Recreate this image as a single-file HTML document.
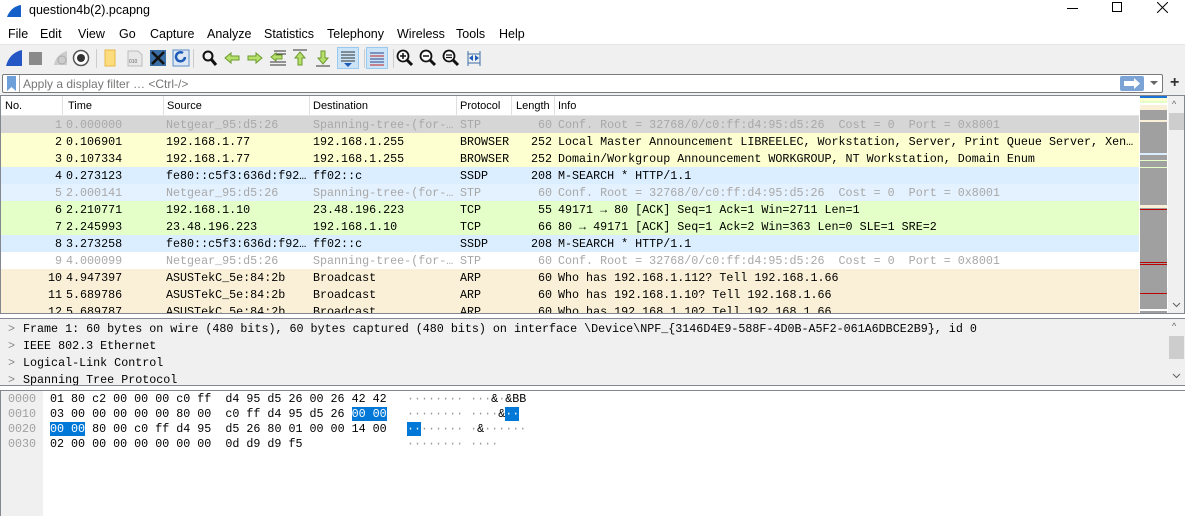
<!DOCTYPE html>
<html><head><meta charset="utf-8"><style>
*{margin:0;padding:0;box-sizing:border-box}
body{width:1185px;height:516px;overflow:hidden;background:#fff;font-family:"Liberation Sans",sans-serif;position:relative;font-size:12px;color:#000}
.a{position:absolute}
.menu span{position:absolute;top:27px;font-size:12.5px}
.mono{font-family:"Liberation Mono",monospace;font-size:11.7px;white-space:pre}
.row{position:absolute;left:1px;width:1138px;height:17px}
.row span{position:absolute;top:2px}
.r{text-align:right}
.hdr span{position:absolute;top:4px;font-size:11px}
.sep{position:absolute;top:0;width:1px;height:19px;background:#e0e0e0}
.ic{position:absolute;top:49px;width:18px;height:18px}
</style></head><body>
<!-- title -->
<svg class="a" style="left:6px;top:4px" width="16" height="14"><path d="M1 13 C3 7 8 2 15 1 L15 13 Z" fill="#1560c8"/></svg>
<div class="a" style="left:29px;top:3px;font-size:12.5px">question4b(2).pcapng</div>
<div class="a" style="left:1067px;top:8px;width:11px;height:1px;background:#000"></div>
<div class="a" style="left:1112px;top:2px;width:10px;height:10px;border:1px solid #000"></div>
<svg class="a" style="left:1157px;top:2px" width="11" height="11"><path d="M0 0L11 11M11 0L0 11" stroke="#000"/></svg>
<div class="menu">
<span style="left:8px">File</span><span style="left:40px">Edit</span><span style="left:78px">View</span><span style="left:119px">Go</span><span style="left:150px">Capture</span><span style="left:207px">Analyze</span><span style="left:264px">Statistics</span><span style="left:327px">Telephony</span><span style="left:397px">Wireless</span><span style="left:456px">Tools</span><span style="left:499px">Help</span>
</div>
<!-- toolbar -->
<div class="a" style="left:0;top:44px;width:1185px;height:27px;background:#f0f0f0;border-top:1px solid #e6e6e6"></div>
<svg class="ic" style="left:5px"><path d="M1 17 C3 9 8 3 17 1 L17 17Z" fill="#2457c5"/></svg>
<div class="ic" style="left:29px;top:52px;width:13px;height:13px;background:#8a8a8a"></div>
<svg class="ic" style="left:51px"><path d="M3 16 C4 9 9 4 16 2 L16 16Z" fill="#ccc"/><circle cx="11" cy="11" r="4" fill="none" stroke="#aaa"/></svg>
<svg class="ic" style="left:72px"><circle cx="9" cy="9" r="7.5" fill="#fff" stroke="#555" stroke-width="1.5"/><circle cx="9" cy="9" r="4" fill="#333"/></svg>
<div class="a" style="left:96px;top:49px;width:1px;height:19px;background:#ccc"></div>
<svg class="ic" style="left:103px"><path d="M2 1h10v16H2z" fill="#fddc7e" stroke="#e8b84a"/></svg>
<svg class="ic" style="left:126px"><path d="M2 2h10l4 4v11H2z" fill="#e8e8e8" stroke="#bbb"/><text x="3" y="14" font-size="5" fill="#666">010</text></svg>
<svg class="ic" style="left:149px"><rect x="1" y="1" width="16" height="16" fill="#3b6ea5"/><path d="M3 3L15 15M15 3L3 15" stroke="#111" stroke-width="2.5"/></svg>
<svg class="ic" style="left:172px"><rect x="1" y="1" width="16" height="16" fill="#dde8f4" stroke="#5b8bc4"/><path d="M13 8a4.5 4.5 0 1 1-2-4" stroke="#1d5bb8" stroke-width="2.5" fill="none"/></svg>
<div class="a" style="left:193px;top:49px;width:1px;height:19px;background:#ccc"></div>
<svg class="ic" style="left:201px"><circle cx="7" cy="7" r="4.5" fill="none" stroke="#111" stroke-width="2"/><path d="M10 10l5 6" stroke="#111" stroke-width="3"/></svg>
<svg class="ic" style="left:223px"><path d="M2 9l6-5v3h8v4H8v3z" fill="#b6e06a" stroke="#6c9a2e"/></svg>
<svg class="ic" style="left:246px"><path d="M16 9l-6-5v3H2v4h8v3z" fill="#b6e06a" stroke="#6c9a2e"/></svg>
<svg class="ic" style="left:269px"><path d="M1 13h16M1 16h16M5 2h12M5 5h12" stroke="#333"/><path d="M2 8l5-4v2h6v4H7v2z" fill="#b6e06a" stroke="#6c9a2e"/></svg>
<svg class="ic" style="left:291px"><path d="M2 1h14" stroke="#333"/><path d="M9 3l5 6h-3v7H7V9H4z" fill="#b6e06a" stroke="#6c9a2e"/></svg>
<svg class="ic" style="left:314px"><path d="M2 17h14" stroke="#333"/><path d="M9 15l5-6h-3V2H7v7H4z" fill="#b6e06a" stroke="#6c9a2e"/></svg>
<div class="a" style="left:337px;top:47px;width:22px;height:22px;background:#cce4f7;border:1px solid #99c9ef"></div>
<svg class="ic" style="left:339px"><path d="M2 3h14M2 6h14M2 9h14M2 12h14" stroke="#333"/><path d="M5 14h8l-4 4z" fill="#1d5bb8"/></svg>
<div class="a" style="left:364px;top:49px;width:1px;height:19px;background:#ccc"></div>
<div class="a" style="left:366px;top:47px;width:22px;height:22px;background:#cce4f7;border:1px solid #99c9ef"></div>
<svg class="ic" style="left:368px"><path d="M2 4h14M2 10h14M2 13h14" stroke="#2a3f8a"/><path d="M2 7h14M2 16h14" stroke="#c02020"/></svg>
<div class="a" style="left:393px;top:49px;width:1px;height:19px;background:#ccc"></div>
<svg class="ic" style="left:396px"><circle cx="7" cy="7" r="5.5" fill="#fff" stroke="#111" stroke-width="1.8"/><path d="M4 7h6M7 4v6" stroke="#111" stroke-width="1.5"/><path d="M11 11l5 5" stroke="#111" stroke-width="3"/></svg>
<svg class="ic" style="left:419px"><circle cx="7" cy="7" r="5.5" fill="#fff" stroke="#111" stroke-width="1.8"/><path d="M4 7h6" stroke="#111" stroke-width="1.5"/><path d="M11 11l5 5" stroke="#111" stroke-width="3"/></svg>
<svg class="ic" style="left:442px"><circle cx="7" cy="7" r="5.5" fill="#fff" stroke="#111" stroke-width="1.8"/><path d="M4 6h6M4 8.5h6" stroke="#111" stroke-width="1.2"/><path d="M11 11l5 5" stroke="#111" stroke-width="3"/></svg>
<svg class="ic" style="left:465px"><path d="M3 2v15M15 2v15M3 5h12M3 14h12" stroke="#3b6ea5"/><path d="M4 9l4-3v6zM14 9l-4-3v6z" fill="#1d5bb8"/></svg>
<!-- filter -->
<div class="a" style="left:0;top:71px;width:1185px;height:25px;background:#f0f0f0"></div>
<div class="a" style="left:2px;top:74px;width:1161px;height:19px;background:#fff;border:1px solid #7a7a7a;border-radius:2px"></div>
<div class="a" style="left:3px;top:75px;width:17px;height:17px;border-right:1px solid #aaa"></div>
<svg class="a" style="left:7px;top:76px" width="9" height="15"><path d="M0 0h9v15l-4.5-4L0 15z" fill="#6d9fd8"/></svg>
<div class="a" style="left:23px;top:77px;color:#777;font-size:12px">Apply a display filter … &lt;Ctrl-/&gt;</div>
<div class="a" style="left:1120px;top:76px;width:24px;height:15px;background:#7ba3d6;border-radius:2px"></div>
<svg class="a" style="left:1123px;top:78px" width="18" height="11"><path d="M1 3h10V0l6 5.5-6 5.5V8H1z" fill="#fff"/></svg>
<svg class="a" style="left:1150px;top:81px" width="8" height="5"><path d="M0 0h8l-4 4z" fill="#666"/></svg>
<div class="a" style="left:1170px;top:74px;font-size:16px;font-weight:bold;color:#333">+</div>
<!-- packet list -->
<div class="a" style="left:0;top:95px;width:1185px;height:219px;border:1px solid #828790;border-top:1px solid #828790"></div>
<div class="hdr a" style="left:1px;top:96px;width:1138px;height:20px;background:#fff;border-bottom:1px solid #e5e5e5">
<span style="left:4px">No.</span><div class="sep" style="left:61px"></div>
<span style="left:67px">Time</span><div class="sep" style="left:162px"></div>
<span style="left:166px">Source</span><div class="sep" style="left:308px"></div>
<span style="left:312px">Destination</span><div class="sep" style="left:455px"></div>
<span style="left:459px">Protocol</span><div class="sep" style="left:510px"></div>
<span style="left:515px">Length</span><div class="sep" style="left:553px"></div>
<span style="left:557px">Info</span>
</div>
<div id="rows"></div>
<div class="row mono" style="top:116px;background:#d6d6d6;color:#a8a8a8"><span class="r" style="left:0;width:61px">1</span><span style="left:65px">0.000000</span><span style="left:165px">Netgear_95:d5:26</span><span style="left:312px">Spanning-tree-(for-…</span><span style="left:459px">STP</span><span class="r" style="left:500px;width:51px">60</span><span style="left:557px">Conf. Root = 32768/0/c0:ff:d4:95:d5:26  Cost = 0  Port = 0x8001</span></div>
<div class="row mono" style="top:133px;background:#feffd0"><span class="r" style="left:0;width:61px">2</span><span style="left:65px">0.106901</span><span style="left:165px">192.168.1.77</span><span style="left:312px">192.168.1.255</span><span style="left:459px">BROWSER</span><span class="r" style="left:500px;width:51px">252</span><span style="left:557px">Local Master Announcement LIBREELEC, Workstation, Server, Print Queue Server, Xen…</span></div>
<div class="row mono" style="top:150px;background:#feffd0"><span class="r" style="left:0;width:61px">3</span><span style="left:65px">0.107334</span><span style="left:165px">192.168.1.77</span><span style="left:312px">192.168.1.255</span><span style="left:459px">BROWSER</span><span class="r" style="left:500px;width:51px">252</span><span style="left:557px">Domain/Workgroup Announcement WORKGROUP, NT Workstation, Domain Enum</span></div>
<div class="row mono" style="top:167px;background:#daeeff"><span class="r" style="left:0;width:61px">4</span><span style="left:65px">0.273123</span><span style="left:165px">fe80::c5f3:636d:f92…</span><span style="left:312px">ff02::c</span><span style="left:459px">SSDP</span><span class="r" style="left:500px;width:51px">208</span><span style="left:557px">M-SEARCH * HTTP/1.1</span></div>
<div class="row mono" style="top:184px;background:#e4f1fe;color:#a8a8a8"><span class="r" style="left:0;width:61px">5</span><span style="left:65px">2.000141</span><span style="left:165px">Netgear_95:d5:26</span><span style="left:312px">Spanning-tree-(for-…</span><span style="left:459px">STP</span><span class="r" style="left:500px;width:51px">60</span><span style="left:557px">Conf. Root = 32768/0/c0:ff:d4:95:d5:26  Cost = 0  Port = 0x8001</span></div>
<div class="row mono" style="top:201px;background:#e4ffc7"><span class="r" style="left:0;width:61px">6</span><span style="left:65px">2.210771</span><span style="left:165px">192.168.1.10</span><span style="left:312px">23.48.196.223</span><span style="left:459px">TCP</span><span class="r" style="left:500px;width:51px">55</span><span style="left:557px">49171 → 80 [ACK] Seq=1 Ack=1 Win=2711 Len=1</span></div>
<div class="row mono" style="top:218px;background:#e4ffc7"><span class="r" style="left:0;width:61px">7</span><span style="left:65px">2.245993</span><span style="left:165px">23.48.196.223</span><span style="left:312px">192.168.1.10</span><span style="left:459px">TCP</span><span class="r" style="left:500px;width:51px">66</span><span style="left:557px">80 → 49171 [ACK] Seq=1 Ack=2 Win=363 Len=0 SLE=1 SRE=2</span></div>
<div class="row mono" style="top:235px;background:#daeeff"><span class="r" style="left:0;width:61px">8</span><span style="left:65px">3.273258</span><span style="left:165px">fe80::c5f3:636d:f92…</span><span style="left:312px">ff02::c</span><span style="left:459px">SSDP</span><span class="r" style="left:500px;width:51px">208</span><span style="left:557px">M-SEARCH * HTTP/1.1</span></div>
<div class="row mono" style="top:252px;background:#fff;color:#a8a8a8"><span class="r" style="left:0;width:61px">9</span><span style="left:65px">4.000099</span><span style="left:165px">Netgear_95:d5:26</span><span style="left:312px">Spanning-tree-(for-…</span><span style="left:459px">STP</span><span class="r" style="left:500px;width:51px">60</span><span style="left:557px">Conf. Root = 32768/0/c0:ff:d4:95:d5:26  Cost = 0  Port = 0x8001</span></div>
<div class="row mono" style="top:269px;background:#faf0d7"><span class="r" style="left:0;width:61px">10</span><span style="left:65px">4.947397</span><span style="left:165px">ASUSTekC_5e:84:2b</span><span style="left:312px">Broadcast</span><span style="left:459px">ARP</span><span class="r" style="left:500px;width:51px">60</span><span style="left:557px">Who has 192.168.1.112? Tell 192.168.1.66</span></div>
<div class="row mono" style="top:286px;background:#faf0d7"><span class="r" style="left:0;width:61px">11</span><span style="left:65px">5.689786</span><span style="left:165px">ASUSTekC_5e:84:2b</span><span style="left:312px">Broadcast</span><span style="left:459px">ARP</span><span class="r" style="left:500px;width:51px">60</span><span style="left:557px">Who has 192.168.1.10? Tell 192.168.1.66</span></div>
<div class="row mono" style="top:303px;height:10px;background:#faf0d7;overflow:hidden"><span class="r" style="left:0;width:61px">12</span><span style="left:65px">5.689787</span><span style="left:165px">ASUSTekC_5e:84:2b</span><span style="left:312px">Broadcast</span><span style="left:459px">ARP</span><span class="r" style="left:500px;width:51px">60</span><span style="left:557px">Who has 192.168.1.10? Tell 192.168.1.66</span></div>
<!-- minimap -->
<div class="a" style="left:1140px;top:96px;width:27px;height:217px;background:#a0a0a0"></div>
<div class="a" style="left:1140px;top:96px;width:27px;height:2px;background:#1a74d8"></div>
<div class="a" style="left:1140px;top:98px;width:27px;height:3px;background:#feffd0"></div>
<div class="a" style="left:1140px;top:101px;width:27px;height:2px;background:#e4ffc7"></div>
<div class="a" style="left:1140px;top:103px;width:27px;height:2px;background:#fff"></div>
<div class="a" style="left:1140px;top:105px;width:27px;height:5px;background:#faf0d7"></div>
<div class="a" style="left:1140px;top:120px;width:27px;height:2px;background:#faf0d7"></div>
<div class="a" style="left:1140px;top:153px;width:27px;height:2px;background:#daeeff"></div>
<div class="a" style="left:1140px;top:160px;width:27px;height:1px;background:#e4ffc7"></div>
<div class="a" style="left:1140px;top:167px;width:27px;height:1px;background:#e4ffc7"></div>
<div class="a" style="left:1140px;top:205px;width:27px;height:3px;background:#faf0d7"></div>
<div class="a" style="left:1140px;top:209px;width:27px;height:1px;background:#b00"></div>
<div class="a" style="left:1140px;top:262px;width:27px;height:1px;background:#b00"></div>
<div class="a" style="left:1140px;top:264px;width:27px;height:1px;background:#b00"></div>
<div class="a" style="left:1140px;top:293px;width:27px;height:1px;background:#b00"></div>
<div class="a" style="left:1140px;top:309px;width:27px;height:2px;background:#fff"></div>
<div class="a" style="left:1168px;top:96px;width:16px;height:217px;background:#f0f0f0"></div>
<div class="a" style="left:1169px;top:113px;width:15px;height:17px;background:#cdcdcd"></div>
<div class="a" style="left:1172px;top:99px;font-size:9px;color:#606060">^</div>
<svg class="a" style="left:1172px;top:302px" width="9" height="6"><path d="M1 1l3.5 3.5L8 1" stroke="#606060" fill="none"/></svg>
<!-- details -->
<div class="a" style="left:0;top:318px;width:1185px;height:68px;background:#f0f0f0;border-top:1px solid #828790;border-bottom:1px solid #828790"></div>
<div class="a mono" style="left:8px;top:321px;color:#888;line-height:17px">&gt;
&gt;
&gt;
&gt;</div>
<div class="a mono" style="left:23px;top:321px;line-height:17px;height:64px;overflow:hidden">Frame 1: 60 bytes on wire (480 bits), 60 bytes captured (480 bits) on interface \Device\NPF_{3146D4E9-588F-4D0B-A5F2-061A6DBCE2B9}, id 0
IEEE 802.3 Ethernet
Logical-Link Control
Spanning Tree Protocol</div>
<div class="a" style="left:1169px;top:336px;width:15px;height:23px;background:#cdcdcd"></div>
<div class="a" style="left:1172px;top:321px;font-size:9px;color:#606060">^</div>
<svg class="a" style="left:1172px;top:373px" width="9" height="6"><path d="M1 1l3.5 3.5L8 1" stroke="#606060" fill="none"/></svg>
<!-- bytes -->
<div class="a" style="left:0;top:390px;width:1185px;height:126px;border-top:1px solid #828790;border-left:1px solid #828790"></div>
<div class="a" style="left:1px;top:391px;width:42px;height:125px;background:#f0f0f0"></div>
<div class="a mono" style="left:8px;top:392px;line-height:15px;color:#a0a0a0">0000
0010
0020
0030</div>
<div class="a mono" style="left:50px;top:392px;line-height:15px">01 80 c2 00 00 00 c0 ff  d4 95 d5 26 00 26 42 42
03 00 00 00 00 00 80 00  c0 ff d4 95 d5 26 <span style="background:#0078d7;color:#fff">00 00</span>
<span style="background:#0078d7;color:#fff">00 00</span> 80 00 c0 ff d4 95  d5 26 80 01 00 00 14 00
02 00 00 00 00 00 00 00  0d d9 d9 f5</div>
<div class="a mono" style="left:407px;top:392px;line-height:15px;color:#999">········ ···<span style="color:#000">&amp;</span>·<span style="color:#000">&amp;BB</span>
········ ····<span style="color:#000">&amp;</span><span style="background:#0078d7;color:#fff">··</span>
<span style="background:#0078d7;color:#fff">··</span>······ ·<span style="color:#000">&amp;</span>······
········ ····</div>
</body></html>
